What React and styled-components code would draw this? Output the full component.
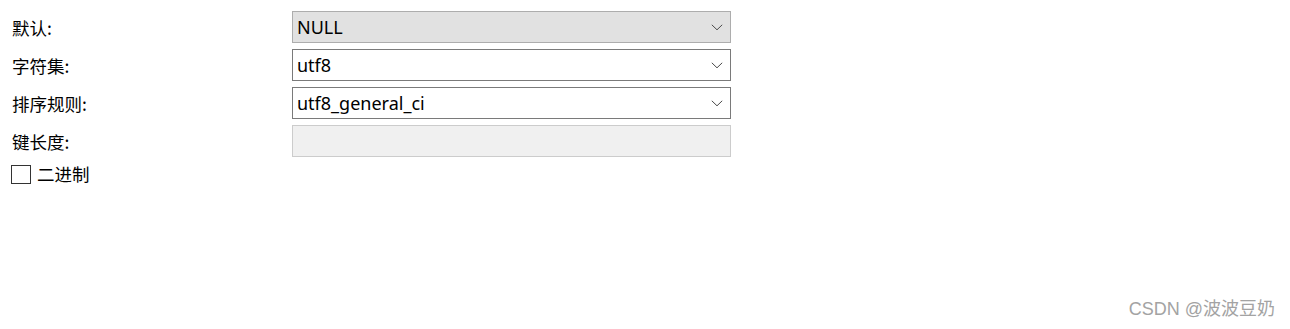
import React from 'react';
import styled, { createGlobalStyle } from 'styled-components';

const GlobalStyle = createGlobalStyle`
  html, body {
    margin: 0;
    padding: 0;
    background: #ffffff;
  }
  body {
    font-family: "Noto Sans", "Noto Sans CJK SC", sans-serif;
    color: #000;
  }
`;

const Page = styled.div`
  position: relative;
  width: 1290px;
  height: 329px;
  overflow: hidden;
  box-sizing: border-box;
  padding: 11px 0 0 12px;
`;

const Form = styled.div`
  display: grid;
  grid-template-columns: 280px 439px;
  row-gap: 6px;
  align-items: center;
`;

const Label = styled.div`
  font-family: "Noto Sans CJK SC", sans-serif;
  font-size: 17.5px;
  line-height: 32px;
  height: 32px;
  padding-top: 1px;
  box-sizing: border-box;
`;

const Field = styled.div`
  box-sizing: border-box;
  height: 32px;
  display: flex;
  align-items: center;
  justify-content: space-between;
  padding: 0 7px 0 4px;
  border: 1px solid ${p => p.$border};
  background: ${p => p.$bg};
  font-family: "Segoe UI", "Noto Sans", sans-serif;
  font-size: 18px;
  color: #000;
`;

const Chevron = () => (
  <svg width="12" height="7" viewBox="0 0 12 7">
    <path d="M0.8 0.8 L6 5.8 L11.2 0.8" fill="none" stroke="#4a4a4a" strokeWidth="1" />
  </svg>
);

const CheckRow = styled.label`
  display: flex;
  align-items: center;
  gap: 6px;
  margin-top: 6px;
  margin-left: -1px;
  font-family: "Noto Sans CJK SC", sans-serif;
  font-size: 17.5px;
  line-height: 22px;
`;

const Box = styled.span`
  box-sizing: border-box;
  width: 20px;
  height: 19px;
  border: 1px solid #333;
  background: #fff;
`;

const Watermark = styled.div`
  position: absolute;
  right: 15px;
  bottom: 9px;
  font-family: "Liberation Sans", "Noto Sans CJK SC", sans-serif;
  font-size: 18px;
  color: #a3a3a3;
`;

const rows = [
  { label: '默认:', value: 'NULL', bg: '#e1e1e1', border: '#adadad', select: true },
  { label: '字符集:', value: 'utf8', bg: '#ffffff', border: '#7a7a7a', select: true },
  { label: '排序规则:', value: 'utf8_general_ci', bg: '#ffffff', border: '#7a7a7a', select: true },
  { label: '键长度:', value: '', bg: '#f0f0f0', border: '#cccccc', select: false },
];

const App = () => (
  <Page>
    <GlobalStyle />
    <Form>
      {rows.map(r => (
        <React.Fragment key={r.label}>
          <Label>{r.label}</Label>
          <Field $bg={r.bg} $border={r.border}>
            <span>{r.value}</span>
            {r.select && <Chevron />}
          </Field>
        </React.Fragment>
      ))}
    </Form>
    <CheckRow>
      <Box />
      二进制
    </CheckRow>
    <Watermark>CSDN @波波豆奶</Watermark>
  </Page>
);

export default App;
